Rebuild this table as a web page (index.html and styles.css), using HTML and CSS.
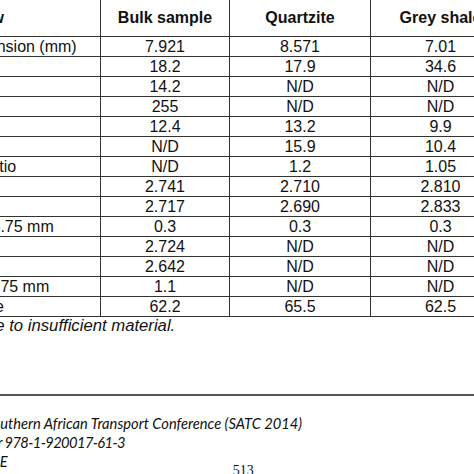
FILE: index.html
```html
<!DOCTYPE html>
<html>
<head>
<meta charset="utf-8">
<link rel="stylesheet" href="styles.css">
</head>
<body>
<div class="page">
  <table class="data">
    <colgroup>
      <col class="c1"><col class="c2"><col class="c3"><col class="c4">
    </colgroup>
    <thead>
      <tr><th class="label">Aggregate overview</th><th>Bulk sample</th><th>Quartzite</th><th>Grey shale</th></tr>
    </thead>
    <tbody>
      <tr><td class="label">Average Least Dimension (mm)</td><td>7.921</td><td>8.571</td><td>7.01</td></tr>
      <tr><td class="label">Flakiness index (%)</td><td>18.2</td><td>17.9</td><td>34.6</td></tr>
      <tr><td class="label">ACV dry (%)</td><td>14.2</td><td>N/D</td><td>N/D</td></tr>
      <tr><td class="label">10% FACT (kN)</td><td>255</td><td>N/D</td><td>N/D</td></tr>
      <tr><td class="label">ACV (%)</td><td>12.4</td><td>13.2</td><td>9.9</td></tr>
      <tr><td class="label">ACV wet (%)</td><td>N/D</td><td>15.9</td><td>10.4</td></tr>
      <tr><td class="label">Wet/Dry Durability ratio</td><td>N/D</td><td>1.2</td><td>1.05</td></tr>
      <tr><td class="label">BRD (&gt;4.75 mm)</td><td>2.741</td><td>2.710</td><td>2.810</td></tr>
      <tr><td class="label">ARD (&gt;4.75 mm)</td><td>2.717</td><td>2.690</td><td>2.833</td></tr>
      <tr><td class="label">Water absorption &gt; 4.75 mm</td><td>0.3</td><td>0.3</td><td>0.3</td></tr>
      <tr><td class="label">BRD (&lt;4.75 mm)</td><td>2.724</td><td>N/D</td><td>N/D</td></tr>
      <tr><td class="label">ARD (&lt;4.75 mm)</td><td>2.642</td><td>N/D</td><td>N/D</td></tr>
      <tr><td class="label">Water absorption &lt;4.75 mm</td><td>1.1</td><td>N/D</td><td>N/D</td></tr>
      <tr><td class="label">Polished Stone Value</td><td>62.2</td><td>65.5</td><td>62.5</td></tr>
    </tbody>
  </table>
  <p class="note">N/D: Not determined due to insufficient material.</p>
  <hr class="rule">
  <div class="footer">
    <p class="fline l1">Proceedings of the 33rd Southern African Transport Conference (SATC 2014)</p>
    <p class="fline l2">ISBN Number 978-1-920017-61-3</p>
    <div class="lastrow">
      <p class="fline l3">Produced by: CE</p>
      <span class="pageno">513</span>
    </div>
  </div>
</div>
</body>
</html>
```

FILE: styles.css
```css
html, body {
  margin: 0;
  padding: 0;
  background: #ffffff;
}
body {
  width: 474px;
  height: 474px;
  overflow: hidden;
  font-family: "Liberation Sans", Arial, sans-serif;
  color: #111111;
}
.page {
  width: 474px;
  height: 474px;
  overflow: hidden;
  display: flex;
  flex-direction: column;
}
.data {
  flex: none;
  margin-left: -150px;
  margin-top: -2px;
  border-collapse: collapse;
  table-layout: fixed;
  width: 660px;
  font-size: 16px;
}
.c1 { width: 250px; }
.c2 { width: 129px; }
.c3 { width: 141px; }
.c4 { width: 140px; }
.data th, .data td {
  border-left: 1px solid #333333;
  border-right: 1px solid #333333;
  border-bottom: 1px solid #333333;
  text-align: center;
  white-space: nowrap;
  overflow: hidden;
  padding: 0;
}
.data th {
  height: 36px;
  font-weight: bold;
  vertical-align: middle;
  padding-top: 2px;
}
.data td {
  height: 18px;
  line-height: 18px;
  padding-top: 1px;
  vertical-align: top;
}
.data .label {
  text-align: left;
  padding-left: 1px;
}
.note {
  margin: 0 0 0 -180px;
  font-style: italic;
  font-size: 16.7px;
  line-height: 18px;
  white-space: nowrap;
}
.rule {
  margin: 59px 0 0 0;
  height: 0;
  border: none;
  border-top: 2px solid #555555;
  width: 474px;
}
.footer {
  margin-top: 18px;
  font-family: Lato, "Open Sans", sans-serif;
  font-style: italic;
  font-size: 14.7px;
  color: #111111;
}
.fline {
  margin: 0;
  white-space: nowrap;
  line-height: 19px;
}
.l1 { margin-left: -163px; }
.l2 { margin-left: -75px; letter-spacing: -0.6px; }
.l3 { margin-left: -92px; }
.lastrow {
  display: flex;
  align-items: flex-start;
}
.pageno {
  margin-left: 225px;
  padding-top: 11px;
  font-family: "Liberation Serif", "Times New Roman", serif;
  font-style: normal;
  font-size: 14px;
}
```
